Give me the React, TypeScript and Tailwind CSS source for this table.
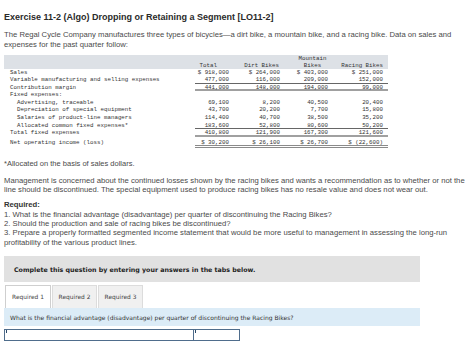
import React from "react";

type Row = {
  label: string;
  indent?: boolean;
  vals: string[];
  line?: "thin" | "thick" | "double";
  tall?: boolean;
};

const rows: Row[] = [
  { label: "Sales", vals: ["$ 918,000", "$ 264,000", "$ 403,000", "$ 251,000"] },
  { label: "Variable manufacturing and selling expenses", vals: ["477,000", "116,000", "209,000", "152,000"], line: "thin" },
  { label: "Contribution margin", vals: ["441,000", "148,000", "194,000", "99,000"], line: "thick" },
  { label: "Fixed expenses:", vals: ["", "", "", ""] },
  { label: "Advertising, traceable", indent: true, vals: ["69,100", "8,200", "40,500", "20,400"] },
  { label: "Depreciation of special equipment", indent: true, vals: ["43,700", "20,200", "7,700", "15,800"] },
  { label: "Salaries of product-line managers", indent: true, vals: ["114,400", "40,700", "38,500", "35,200"] },
  { label: "Allocated common fixed expenses*", indent: true, vals: ["183,600", "52,800", "80,600", "50,200"], line: "thin" },
  { label: "Total fixed expenses", vals: ["410,800", "121,900", "167,300", "121,600"], line: "thick" },
  { label: "Net operating income (loss)", vals: ["$ 30,200", "$ 26,100", "$ 26,700", "$ (22,600)"], line: "double", tall: true },
];

const colW = ["w-[37px]", "w-[51px]", "w-[48px]", "w-[57px]"];
const colPr = ["pr-[3px]", "pr-[3px]", "pr-[3px]", "pr-[5px]"];

function lineCls(line?: Row["line"]) {
  if (line === "thin") return "border-b border-[#666]";
  if (line === "thick") return "border-b-2 border-[#a0a0a0]";
  if (line === "double") return "border-b-[3px] border-double border-[#8a8a8a]";
  return "";
}

export default function App() {
  const body = { fontFamily: '"Liberation Sans", Arial, sans-serif' };
  const mono = { fontFamily: '"Liberation Mono", "DejaVu Sans Mono", monospace' };
  const verd = { fontFamily: '"DejaVu Sans", Verdana, sans-serif' };
  return (
    <div className="w-[474px] h-[345px] overflow-hidden bg-white px-[4px]" style={body}>
      <div className="pt-[11px] text-[9px] leading-[12px] font-bold text-[#2a2a2a]">
        Exercise 11-2 (Algo) Dropping or Retaining a Segment [LO11-2]
      </div>
      <div className="mt-[7px] text-[7.7px] leading-[9.5px] text-[#4a4a4a]">
        The Regal Cycle Company manufactures three types of bicycles—a dirt bike, a mountain bike, and a racing bike. Data on sales and expenses for the past quarter follow:
      </div>

      <div className="mt-[5.5px] w-[384px] text-[5.8px] text-[#333]" style={mono}>
        <div className="flex h-[14px] bg-[#dde1e6] leading-[7px]">
          <div className="w-[191px]" />
          <div className={`${colW[0]} flex items-end justify-end pr-[15px]`}>Total</div>
          <div className={`${colW[1]} flex items-end justify-end pr-[4px]`}>Dirt Bikes</div>
          <div className={`${colW[2]} flex flex-col items-center justify-end pl-[11px]`}>
            <span>Mountain</span>
            <span>Bikes</span>
          </div>
          <div className={`${colW[3]} flex items-end justify-end pr-[5px]`}>Racing Bikes</div>
        </div>
        {rows.map((r, i) => (
          <div key={i} className={`flex ${r.tall ? "h-[11px] pt-[2px]" : "h-[7.6px]"} leading-[7.6px]`}>
            <div className={`w-[191px] whitespace-pre ${r.indent ? "pl-[13px]" : "pl-[6px]"}`}>{r.label}</div>
            {r.vals.map((v, j) => (
              <div key={j} className={`${colW[j]} ${colPr[j]} text-right whitespace-pre ${lineCls(r.line)}`}>
                {v}
              </div>
            ))}
          </div>
        ))}
      </div>

      <div className="mt-[11px] text-[7.5px] leading-[9px] text-[#4a4a4a]">*Allocated on the basis of sales dollars.</div>
      <div className="mt-[8px] text-[7.7px] leading-[9px] text-[#4a4a4a]">
        Management is concerned about the continued losses shown by the racing bikes and wants a recommendation as to whether or not the line should be discontinued. The special equipment used to produce racing bikes has no resale value and does not wear out.
      </div>
      <div className="mt-[6.5px] text-[7.7px] leading-[9.3px] text-[#4a4a4a]">
        <div className="font-bold text-[#333]">Required:</div>
        <div>1. What is the financial advantage (disadvantage) per quarter of discontinuing the Racing Bikes?</div>
        <div>2. Should the production and sale of racing bikes be discontinued?</div>
        <div>3. Prepare a properly formatted segmented income statement that would be more useful to management in assessing the long-run profitability of the various product lines.</div>
      </div>

      <div className="mt-[9.5px] w-[416px] h-[26px] bg-[#e1e1e1] flex items-center pl-[10px]">
        <span className="text-[6.3px] font-bold text-[#222]" style={verd}>
          Complete this question by entering your answers in the tabs below.
        </span>
      </div>

      <div className="mt-[3px] flex h-[23px] pl-[1px] text-[5.9px] text-[#444]" style={verd}>
        <div className="w-[46px] bg-white border border-b-0 border-[#cfcfcf] flex items-center justify-center">Required 1</div>
        <div className="ml-[1px] w-[45px] bg-[#f0f0f0] border border-b-0 border-[#dcdcdc] flex items-center justify-center">Required 2</div>
        <div className="ml-[1px] w-[45px] bg-[#f0f0f0] border border-b-0 border-[#dcdcdc] flex items-center justify-center">Required 3</div>
      </div>
      <div className="w-[416px] h-[18px] bg-[#dcecf7] flex items-center pl-[6px] text-[6px] text-[#333]" style={verd}>
        What is the financial advantage (disadvantage) per quarter of discontinuing the Racing Bikes?
      </div>
      <div className="mt-[3px] flex h-[12px]">
        <div className="relative w-[190px] border border-[#4f6d8c]">
          <div className="absolute left-[1px] top-0 w-[1px] h-[3px] bg-[#2a4a6a]" />
        </div>
        <div className="relative w-[46px] border border-l-0 border-[#4f6d8c]">
          <div className="absolute left-[1px] top-0 w-[1px] h-[3px] bg-[#2a4a6a]" />
        </div>
      </div>
    </div>
  );
}
